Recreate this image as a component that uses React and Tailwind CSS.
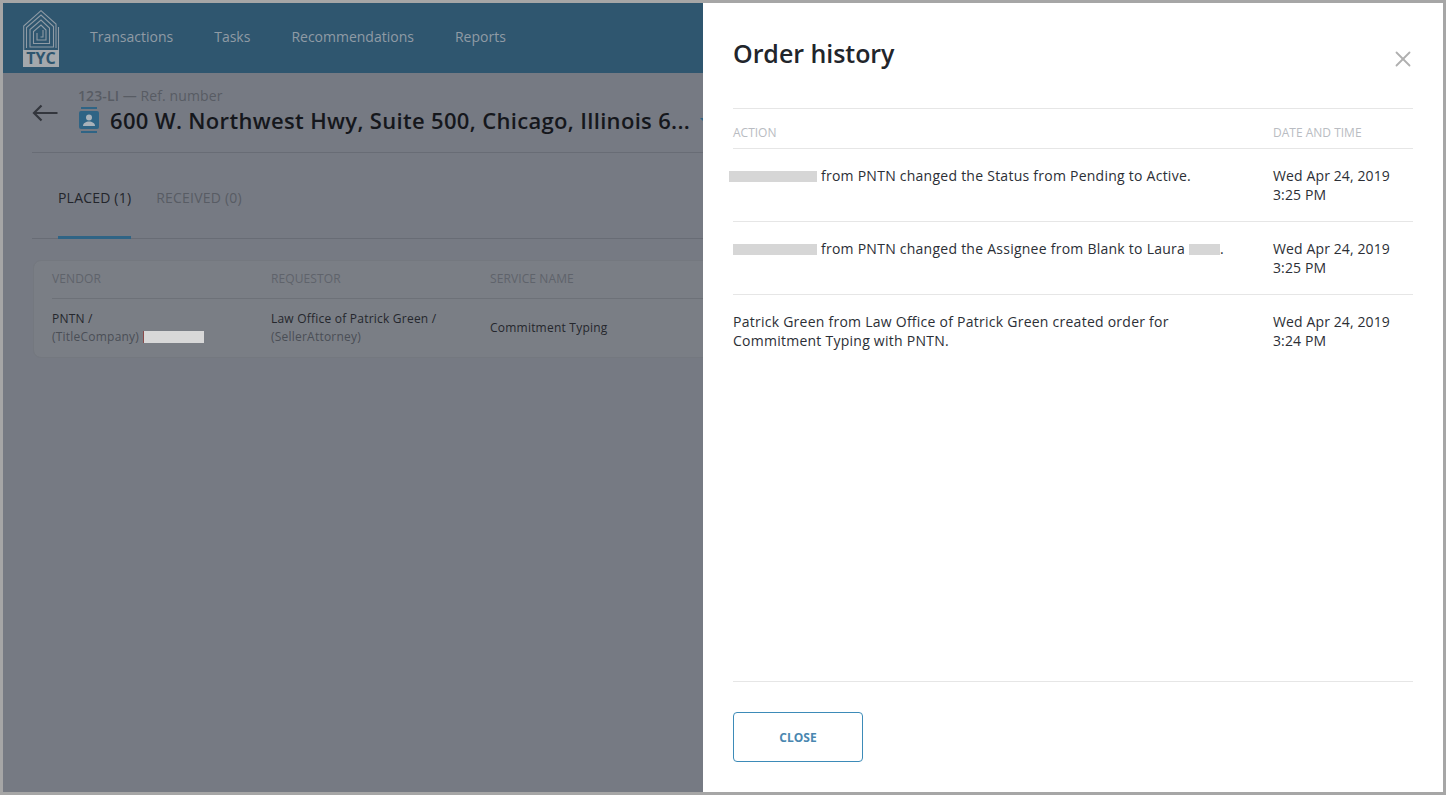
import React from 'react';
import { X } from 'lucide-react';

function Logo() {
  return (
    <div className="w-[37px] shrink-0">
      <svg width="37" height="40" viewBox="0 0 37 40" className="block">
        <g fill="none" stroke="#8f9ba5" strokeWidth="1.1">
          <path d="M0.700 40V16L18 0.700 33 14V38" />
          <path d="M35.500 17V40" />
          <path d="M3.500 38V17.500L18 5 30.500 16.500V37H7V19.500L18 10 26.500 18V33.500H10.500V21.500L18 15 23 20V30H14V23" />
          <path d="M17.500 27H20V20" />
        </g>
      </svg>
      <div className="w-[36px] h-[17px] bg-[#a4a8ac] text-center text-[16px] leading-[17px] font-bold text-[#2f566f]">TYC</div>
    </div>
  );
}

function ContactIcon() {
  return (
    <svg width="22" height="26" viewBox="0 0 22 26" className="shrink-0">
      <rect x="2" y="0" width="16" height="2" fill="#2f6485" />
      <rect x="2" y="24" width="16" height="2" fill="#2f6485" />
      <rect x="0" y="4" width="20" height="18" rx="2" fill="#2f6485" />
      <circle cx="10" cy="10.5" r="3" fill="#a9b2ba" />
      <path d="M4 19c0-3 3-4.500 6-4.500s6 1.500 6 4.500z" fill="#a9b2ba" />
    </svg>
  );
}

function BackArrow() {
  return (
    <svg width="26" height="18" viewBox="0 0 26 18" className="shrink-0">
      <path d="M25.500 9H2M9.500 1.500L2 9l7.500 7.500" fill="none" stroke="#33363d" strokeWidth="2.200" />
    </svg>
  );
}

function HistoryRow({ children, date, time }) {
  return (
    <div className="flex border-b border-[#e6e6e6] h-[73px] pt-[17px] text-[14px] leading-[19px] tracking-[0.25px] text-[#2c2f36]">
      <div className="flex-1 min-w-0 pr-6">{children}</div>
      <div className="w-[140px] shrink-0 tracking-[0.12px]">
        <div>{date}</div>
        <div>{time}</div>
      </div>
    </div>
  );
}

export default function App() {
  return (
    <div className="relative w-[1446px] h-[795px] border-[3px] border-[#a6a6a6] bg-[#767a83] overflow-hidden font-['Open_Sans',sans-serif]">
      {/* Page behind the drawer */}
      <header className="flex items-center h-[70px] bg-[#2f566f] pl-5 pb-1 gap-[41px] text-[14px] text-[#8f9ba5]">
        <div className="mr-[-10px] mt-1 flex items-center"><Logo /></div>
        <span className="ml-[-1px]">Transactions</span>
        <span>Tasks</span>
        <span>Recommendations</span>
        <span>Reports</span>
      </header>

      <div className="flex items-center h-[80px] mx-[29px] border-b border-[#686c75]">
        <BackArrow />
        <div className="ml-[21px] mb-[4px]">
          <div className="text-[14px] leading-[18px] tracking-[0.1px] text-[#585c64] ml-[-1px]">
            <span className="font-semibold">123-LI</span> — Ref. number
          </div>
          <div className="flex items-center gap-[9px]">
            <ContactIcon />
            <span className="text-[22px] leading-[30px] font-semibold tracking-[0.33px] text-[#15171c] whitespace-nowrap">
              600 W. Northwest Hwy, Suite 500, Chicago, Illinois 6...
            </span>
            <svg width="8" height="6" viewBox="0 0 8 6" className="ml-[1px] shrink-0">
              <path d="M0 1h8L4 5z" fill="#2f6485" />
            </svg>
          </div>
        </div>
      </div>

      <div className="flex gap-[25px] mx-[29px] h-[86px] border-b border-[#686c75] px-[26px] text-[14px] tracking-[0.2px]">
        <div className="h-[86px] pt-[35px] leading-[19px] text-[#23252b] border-b-[3px] border-[#2f6485]">PLACED (1)</div>
        <div className="pt-[35px] leading-[19px] text-[#585c64]">RECEIVED (0)</div>
      </div>

      <div className="ml-[30px] mt-[21px] w-[760px] h-[98px] rounded-[8px] bg-[#7a7e85] border border-[#74787f] px-[18px]">
        <div className="grid grid-cols-[219px_219px_1fr] items-center h-[38px] pb-[2px] border-b border-[#6d7178] text-[12px] tracking-[0.1px] text-[#5f636b]">
          <span>VENDOR</span>
          <span>REQUESTOR</span>
          <span>SERVICE NAME</span>
        </div>
        <div className="grid grid-cols-[219px_219px_1fr] items-center h-[58px] text-[12px] leading-[18px] tracking-[0.22px] text-[#25272d]">
          <div>
            <div>PNTN /</div>
            <div className="flex items-center text-[#4a4e56]">
              (TitleCompany)
              <span className="ml-[4px] w-[61px] h-[12px] bg-[#d8d8d8] border-l border-[#8a4a4a]" />
            </div>
          </div>
          <div>
            <div>Law Office of Patrick Green /</div>
            <div className="text-[#4a4e56]">(SellerAttorney)</div>
          </div>
          <div>Commitment Typing</div>
        </div>
      </div>

      {/* Order history drawer */}
      <aside className="absolute top-0 right-0 bottom-0 w-[740px] bg-white px-[30px] flex flex-col">
        <div className="flex justify-between h-[106px] border-b border-[#e6e6e6]">
          <h2 className="mt-[34px] text-[25px] leading-[33px] font-semibold tracking-[-0.05px] text-[#22252b]">Order history</h2>
          <X size={26} strokeWidth={1.7} className="mt-[43px] mr-[-3px] text-[#b0b0b0]" />
        </div>

        <div className="flex items-center h-[40px] pt-[9px] border-b border-[#e6e6e6] text-[12px] text-[#b9bcc2]">
          <span className="flex-1">ACTION</span>
          <span className="w-[140px]">DATE AND TIME</span>
        </div>

        <HistoryRow date="Wed Apr 24, 2019" time="3:25 PM">
          <span className="inline-block align-[-1px] ml-[-4px] mr-[4px] w-[88px] h-[11px] bg-[#d6d6d6]" />
          from PNTN changed the Status from Pending to Active.
        </HistoryRow>
        <HistoryRow date="Wed Apr 24, 2019" time="3:25 PM">
          <span className="inline-block align-[-1px] mr-[4px] w-[84px] h-[11px] bg-[#d6d6d6]" />
          from PNTN changed the Assignee from Blank to Laura
          <span className="inline-block align-[-1px] ml-[4px] w-[31px] h-[11px] bg-[#d6d6d6]" />.
        </HistoryRow>
        <div className="flex h-[73px] pt-[17px] text-[14px] leading-[19px] tracking-[0.25px] text-[#2c2f36]">
          <div className="flex-1 min-w-0 pr-[60px]">
            Patrick Green from Law Office of Patrick Green created order for Commitment Typing with PNTN.
          </div>
          <div className="w-[140px] shrink-0 tracking-[0.12px]">
            <div>Wed Apr 24, 2019</div>
            <div>3:24 PM</div>
          </div>
        </div>

        <div className="mt-auto border-t border-[#e6e6e6] h-[111px] pt-[30px]">
          <button className="w-[130px] h-[50px] pt-[1px] rounded-[4px] border border-[#3d8bb8] bg-white text-[12px] font-bold text-[#4a87b0]">
            CLOSE
          </button>
        </div>
      </aside>
    </div>
  );
}
